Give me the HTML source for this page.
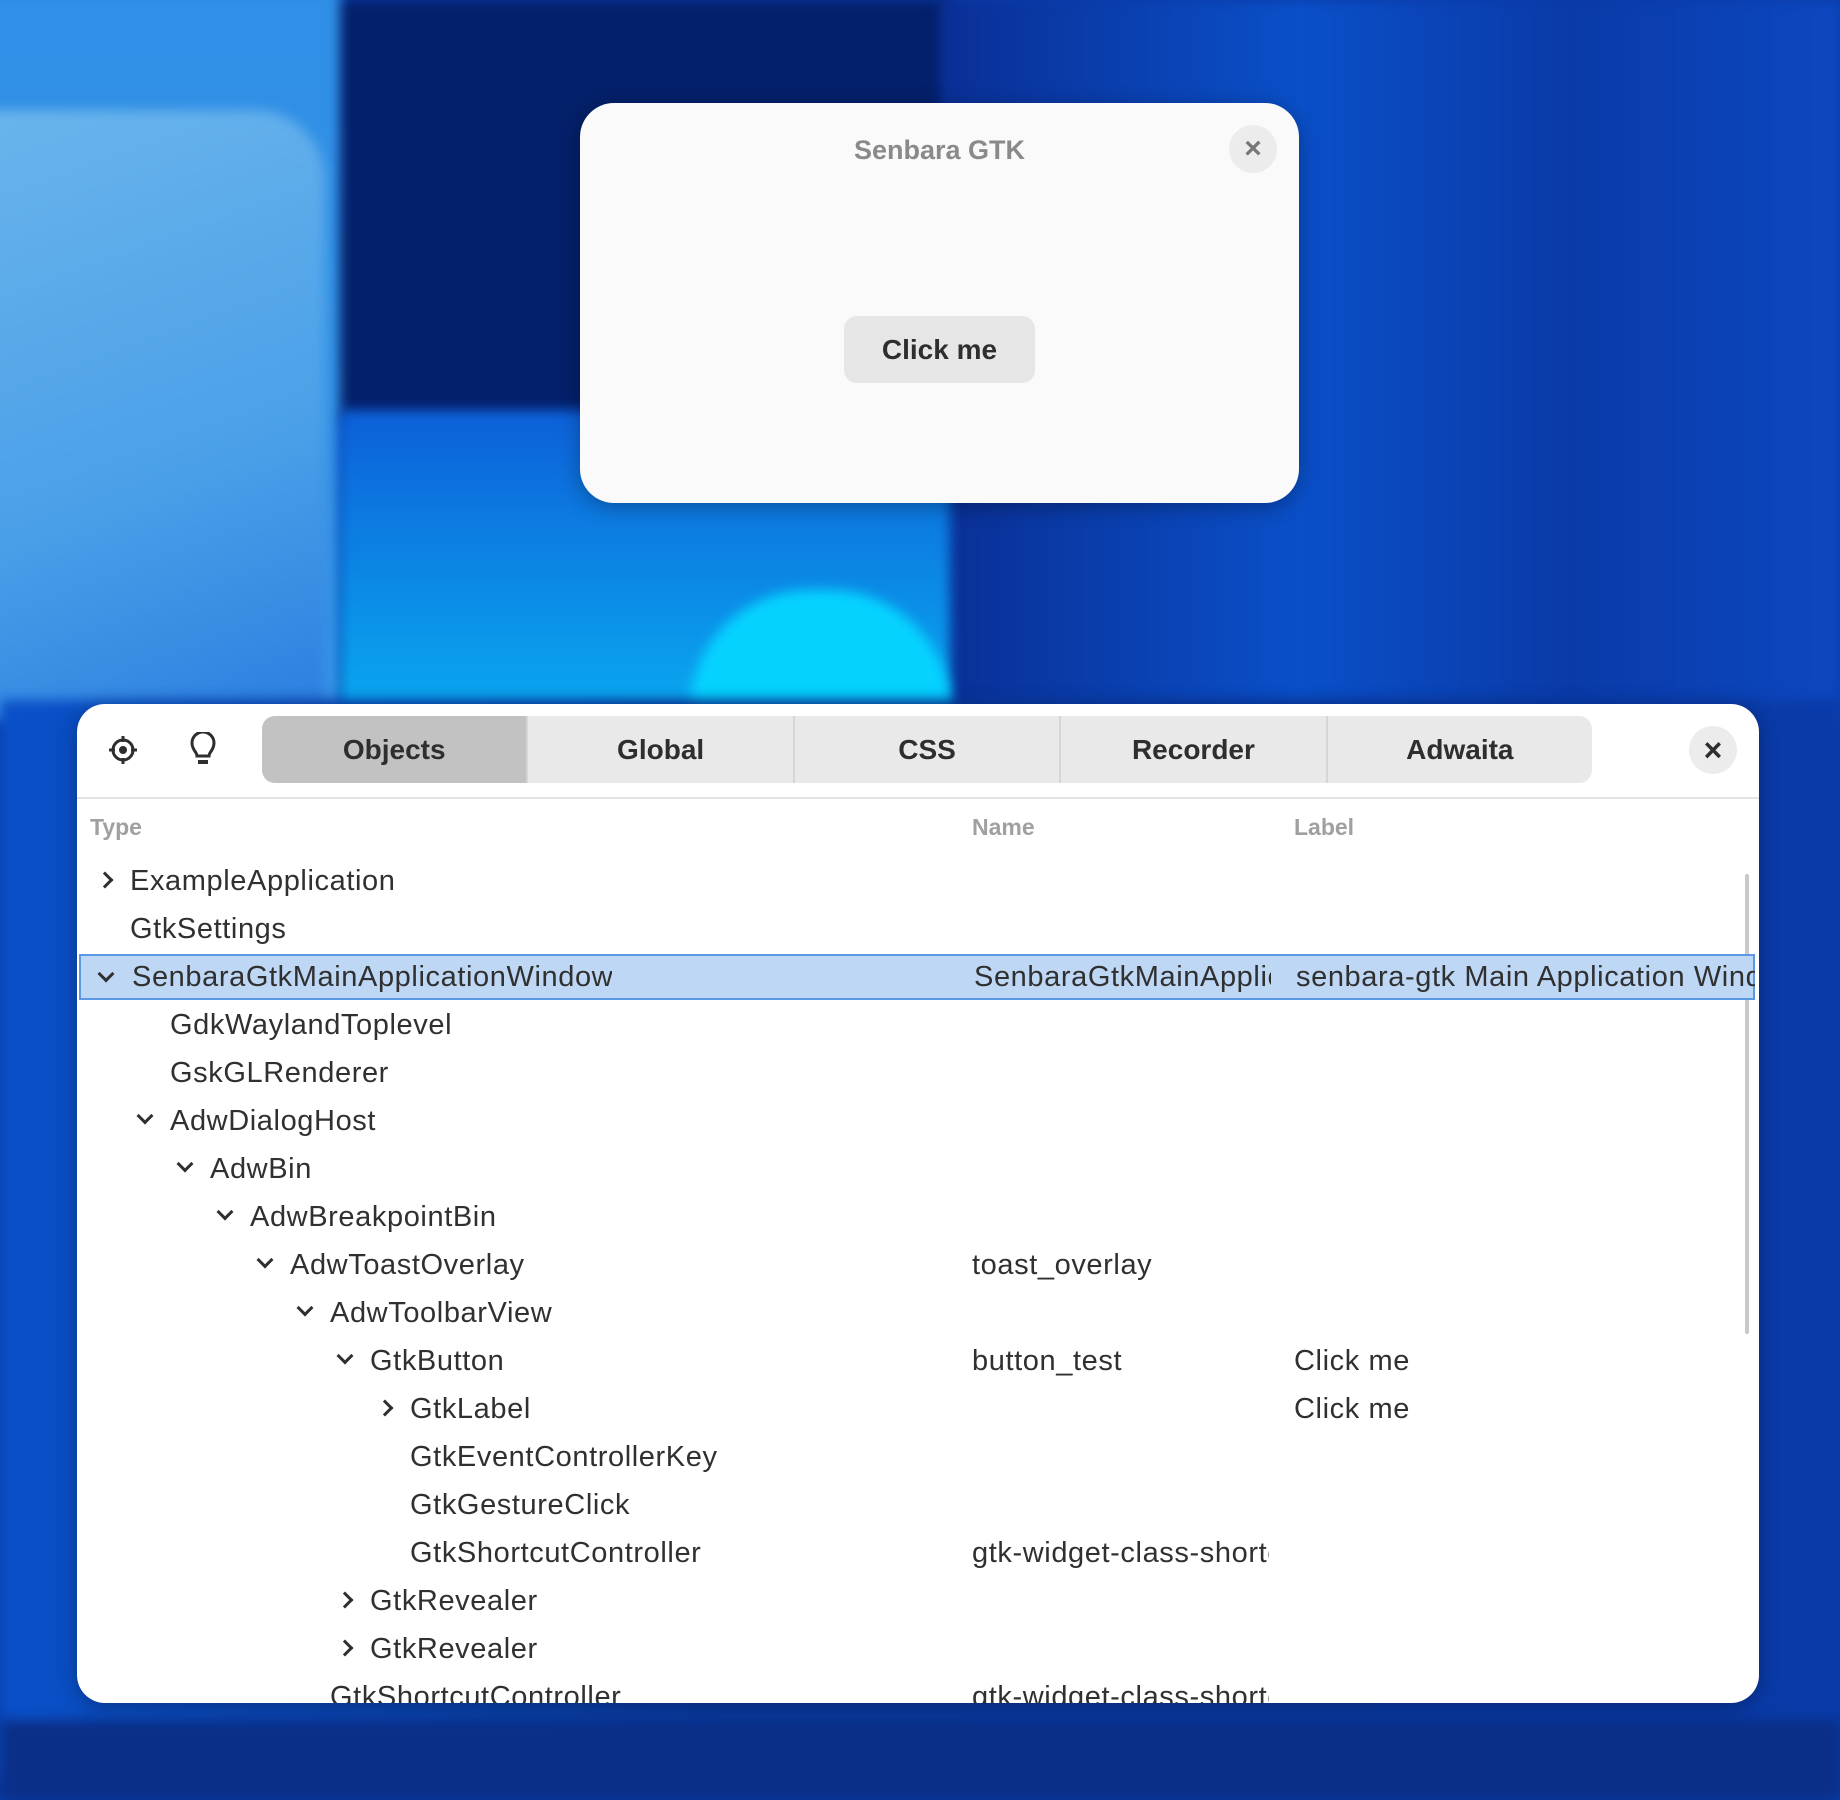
<!DOCTYPE html>
<html><head><meta charset="utf-8"><style>
*{margin:0;padding:0;box-sizing:border-box}
body{width:1840px;height:1774px;overflow:hidden;position:relative;background:#0a3aa8;font-family:"Liberation Sans",sans-serif}
.bg{position:absolute;filter:blur(6px)}
.dlg{position:absolute;left:580px;top:103px;width:719px;height:400px;background:#fafafa;border-radius:34px;box-shadow:0 4px 20px rgba(0,0,0,.3)}
.insp{position:absolute;left:77px;top:704px;width:1682px;height:999px;background:#fff;border-radius:28px;overflow:hidden;box-shadow:0 4px 20px rgba(0,0,0,.3)}
.tabs{position:absolute;left:185px;top:12px;width:1330px;height:67px;background:#e9e9e9;border-radius:13px;display:flex;overflow:hidden}
.tabs div{flex:1;display:flex;align-items:center;justify-content:center;font-weight:bold;font-size:28px;color:#2e2e2e;border-left:2px solid #d6d6d6}
.tabs div:first-child{background:#c2c2c2;border-left:none}
.hdr{position:absolute;top:110px;font-size:23px;font-weight:bold;color:#a0a0a0}
.row{position:absolute;left:0;width:1682px;height:48px;font-size:29px;letter-spacing:0.6px;color:#303030;line-height:48px}
.row span{position:absolute;white-space:nowrap;overflow:hidden}
.sel{background:#bed7f5;border:2px solid #5b9ae2;left:2px;width:1676px;height:46px;line-height:42px}
.ar{position:absolute;width:12px;height:12px;border-right:3px solid #303030;border-bottom:3px solid #303030}
.r{transform:rotate(-45deg)}
.d{transform:rotate(45deg)}
</style></head><body>
<div class="bg" style="left:330px;top:0;width:620px;height:420px;background:#04206a"></div>
<div class="bg" style="left:940px;top:0;width:900px;height:720px;background:linear-gradient(90deg,#0a2f95,#0a4fc8 40%,#0a3aa8 70%,#0c48c0)"></div>
<div class="bg" style="left:-20px;top:-20px;width:360px;height:740px;background:linear-gradient(180deg,#2f8fe6,#3a95e6)"></div>
<div class="bg" style="left:-20px;top:110px;width:345px;height:600px;border-radius:0 70px 0 0;background:linear-gradient(160deg,#6ab4ec,#4aa0e8 60%,#2b7fe0)"></div>
<div class="bg" style="left:340px;top:410px;width:610px;height:300px;background:linear-gradient(180deg,#0d60d8,#0aa8f0)"></div>
<div class="bg" style="left:690px;top:590px;width:260px;height:130px;border-radius:120px 120px 0 0;background:#06d2ff"></div>
<div class="bg" style="left:0;top:700px;width:1840px;height:1074px;background:linear-gradient(90deg,#0a50c8,#0a3aa0 40%,#0a3aa8)"></div>
<div class="bg" style="left:0;top:1720px;width:1840px;height:80px;background:#0a2f88"></div>

<div class="dlg">
 <div style="position:absolute;left:0;right:0;top:32px;text-align:center;font-weight:bold;font-size:27px;color:#8a8a8a">Senbara GTK</div>
 <div style="position:absolute;left:649px;top:22px;width:48px;height:48px;border-radius:50%;background:#ececec;color:#777;font-size:30px;text-align:center;line-height:48px;font-weight:bold">×</div>
 <div style="position:absolute;left:264px;top:213px;width:191px;height:67px;border-radius:13px;background:#e6e6e6;text-align:center;line-height:67px;font-weight:bold;font-size:28px;color:#2e2e2e">Click me</div>
</div>

<div class="insp">
 <svg style="position:absolute;left:30px;top:30px" width="32" height="32" viewBox="0 0 32 32"><circle cx="16" cy="16" r="10" fill="none" stroke="#2e2e2e" stroke-width="3"/><circle cx="16" cy="16" r="4" fill="#2e2e2e"/><path d="M16 2v6M16 24v6M2 16h6M24 16h6" stroke="#2e2e2e" stroke-width="3"/></svg>
 <svg style="position:absolute;left:110px;top:28px" width="32" height="36" viewBox="0 0 32 36"><path d="M10 24c0-4-5-6-5-13a11 11 0 0 1 22 0c0 7-5 9-5 13z" fill="none" stroke="#2e2e2e" stroke-width="3"/><path d="M11 30h10" stroke="#2e2e2e" stroke-width="4"/></svg>
 <div class="tabs"><div>Objects</div><div>Global</div><div>CSS</div><div>Recorder</div><div>Adwaita</div></div>
 <div style="position:absolute;left:1612px;top:22px;width:48px;height:48px;border-radius:50%;background:#ececec;color:#2e2e2e;font-size:32px;text-align:center;line-height:48px;font-weight:bold">×</div>
 <div style="position:absolute;left:0;top:93px;width:100%;height:2px;background:#e4e4e4"></div>
 <div class="hdr" style="left:13px">Type</div>
 <div class="hdr" style="left:895px">Name</div>
 <div class="hdr" style="left:1217px">Label</div>
 <div style="position:absolute;left:1668px;top:170px;width:4px;height:460px;background:#c8c8c8;border-radius:2px"></div>

 <div class="row" style="top:153px"><i class="ar r" style="left:22px;top:17px"></i><span style="left:53px">ExampleApplication</span></div>
 <div class="row" style="top:201px"><span style="left:53px">GtkSettings</span></div>
 <div class="row sel" style="top:250px"><i class="ar d" style="left:19px;top:12px"></i><span style="left:51px;width:480px">SenbaraGtkMainApplicationWindow</span><span style="left:893px;width:297px">SenbaraGtkMainApplicationWindow</span><span style="left:1215px;width:459px">senbara-gtk Main Application Window</span></div>
 <div class="row" style="top:297px"><span style="left:93px">GdkWaylandToplevel</span></div>
 <div class="row" style="top:345px"><span style="left:93px">GskGLRenderer</span></div>
 <div class="row" style="top:393px"><i class="ar d" style="left:62px;top:13px"></i><span style="left:93px">AdwDialogHost</span></div>
 <div class="row" style="top:441px"><i class="ar d" style="left:102px;top:13px"></i><span style="left:133px">AdwBin</span></div>
 <div class="row" style="top:489px"><i class="ar d" style="left:142px;top:13px"></i><span style="left:173px">AdwBreakpointBin</span></div>
 <div class="row" style="top:537px"><i class="ar d" style="left:182px;top:13px"></i><span style="left:213px">AdwToastOverlay</span><span style="left:895px">toast_overlay</span></div>
 <div class="row" style="top:585px"><i class="ar d" style="left:222px;top:13px"></i><span style="left:253px">AdwToolbarView</span></div>
 <div class="row" style="top:633px"><i class="ar d" style="left:262px;top:13px"></i><span style="left:293px">GtkButton</span><span style="left:895px">button_test</span><span style="left:1217px">Click me</span></div>
 <div class="row" style="top:681px"><i class="ar r" style="left:302px;top:17px"></i><span style="left:333px">GtkLabel</span><span style="left:1217px">Click me</span></div>
 <div class="row" style="top:729px"><span style="left:333px">GtkEventControllerKey</span></div>
 <div class="row" style="top:777px"><span style="left:333px">GtkGestureClick</span></div>
 <div class="row" style="top:825px"><span style="left:333px">GtkShortcutController</span><span style="left:895px;width:297px">gtk-widget-class-shortcuts</span></div>
 <div class="row" style="top:873px"><i class="ar r" style="left:262px;top:17px"></i><span style="left:293px">GtkRevealer</span></div>
 <div class="row" style="top:921px"><i class="ar r" style="left:262px;top:17px"></i><span style="left:293px">GtkRevealer</span></div>
 <div class="row" style="top:969px"><span style="left:253px">GtkShortcutController</span><span style="left:895px;width:297px">gtk-widget-class-shortcuts</span></div>
</div>
</body></html>
